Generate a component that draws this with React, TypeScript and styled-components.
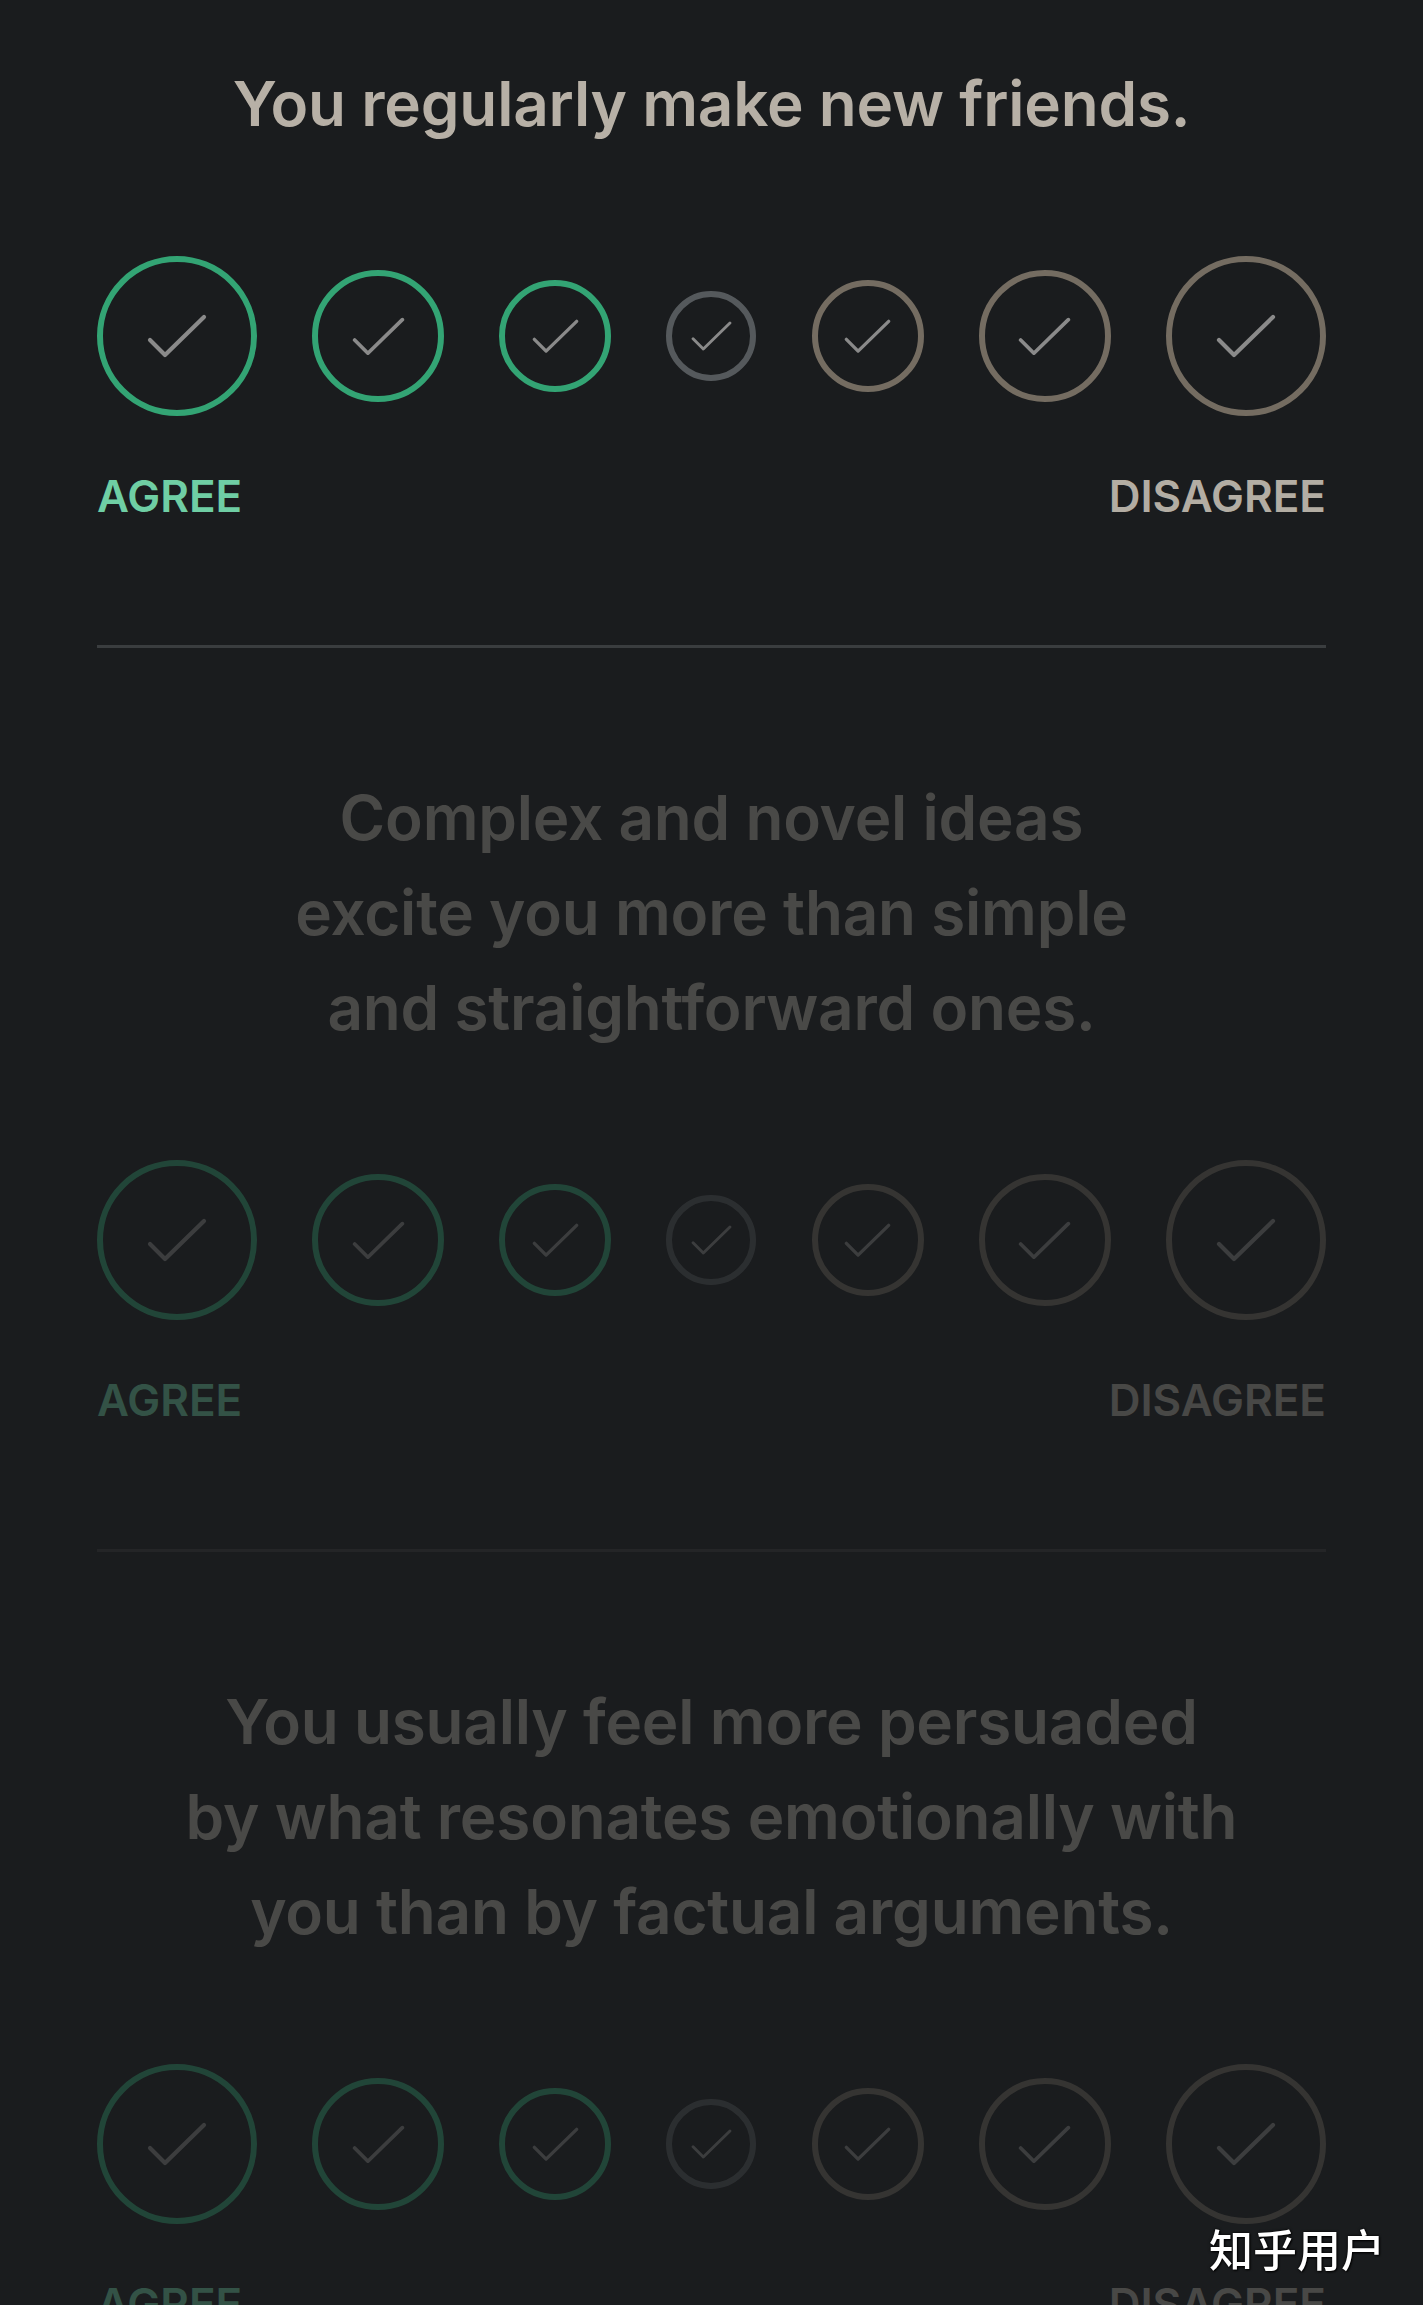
import styled, { createGlobalStyle } from "styled-components";

type Tone = "agree" | "neutral" | "disagree";

const SCALE: { size: number; tone: Tone }[] = [
  { size: 160, tone: "agree" },
  { size: 132, tone: "agree" },
  { size: 112, tone: "agree" },
  { size: 90, tone: "neutral" },
  { size: 112, tone: "disagree" },
  { size: 132, tone: "disagree" },
  { size: 160, tone: "disagree" },
];

const QUESTIONS = [
  { id: 1, lines: ["You regularly make new friends."], active: true },
  {
    id: 2,
    lines: [
      "Complex and novel ideas",
      "excite you more than simple",
      "and straightforward ones.",
    ],
    active: false,
  },
  {
    id: 3,
    lines: [
      "You usually feel more persuaded",
      "by what resonates emotionally with",
      "you than by factual arguments.",
    ],
    active: false,
  },
];

const ringColor: Record<Tone, string> = {
  agree: "#33a474",
  neutral: "#55595c",
  disagree: "#746c61",
};

const App = () => {
  return (
    <>
      <GlobalStyle />
      <Page>
        {QUESTIONS.map((q) => (
          <Question key={q.id} $active={q.active}>
            <Statement>
              {q.lines.map((line, i) => (
                <span key={i}>
                  {line}
                  {i < q.lines.length - 1 && <br />}
                </span>
              ))}
            </Statement>
            <Options>
              {SCALE.map((opt, i) => (
                <Option key={i} $size={opt.size} $tone={opt.tone} aria-label={`option ${i + 1}`}>
                  <Check $size={opt.size} viewBox="0 0 60 44">
                    <path d="M3 26 L18 41 L57 3" />
                  </Check>
                </Option>
              ))}
            </Options>
            <Legend>
              <LegendLabel $tone="agree">Agree</LegendLabel>
              <LegendLabel $tone="disagree">Disagree</LegendLabel>
            </Legend>
          </Question>
        ))}
      </Page>
      <Watermark>知乎用户</Watermark>
    </>
  );
};

const GlobalStyle = createGlobalStyle`
  body {
    margin: 0;
    background: #1a1c1e;
    font-family: Inter, "Noto Sans", sans-serif;
  }
`;

const Page = styled.main`
  padding: 0 97px;
  min-height: 100vh;
  background: #1a1c1e;
`;

const Question = styled.section<{ $active: boolean }>`
  padding: 122px 0;
  border-bottom: 3px solid #3a3d3f;
  opacity: ${({ $active }) => ($active ? 1 : 0.3)};

  &:first-child {
    padding-top: 56px;
  }
`;

const Statement = styled.h2`
  margin: 0;
  font-size: 62px;
  line-height: 95px;
  font-weight: 600;
  letter-spacing: -0.2px;
  text-align: center;
  color: #b7b0a6;
  white-space: nowrap;
`;

const Options = styled.div`
  display: flex;
  align-items: center;
  justify-content: space-between;
  height: 160px;
  margin-top: 105px;
`;

const Option = styled.button<{ $size: number; $tone: Tone }>`
  display: flex;
  align-items: center;
  justify-content: center;
  box-sizing: border-box;
  width: ${({ $size }) => $size}px;
  height: ${({ $size }) => $size}px;
  padding: 0;
  border: 6px solid ${({ $tone }) => ringColor[$tone]};
  border-radius: 50%;
  background: transparent;
  cursor: pointer;
`;

const Check = styled.svg<{ $size: number }>`
  width: ${({ $size }) => Math.round($size * 0.27 + 17)}px;
  height: auto;
  fill: none;
  stroke: #8a8a8a;
  stroke-width: 4.2;
  stroke-linecap: round;
  stroke-linejoin: round;
`;

const Legend = styled.div`
  display: flex;
  justify-content: space-between;
  margin-top: 54px;
`;

const LegendLabel = styled.span<{ $tone: Tone }>`
  font-size: 44px;
  line-height: 53px;
  font-weight: 600;
  text-transform: uppercase;
  color: ${({ $tone }) => ($tone === "agree" ? "#6fcea4" : "#b3ada3")};
`;

const Watermark = styled.div`
  position: fixed;
  right: 38px;
  bottom: 25px;
  font-family: "Noto Sans CJK SC", sans-serif;
  font-size: 44px;
  font-weight: 500;
  color: #ffffff;
  text-shadow: 0 0 3px #000, 1px 1px 2px #000;
`;

export default App;
